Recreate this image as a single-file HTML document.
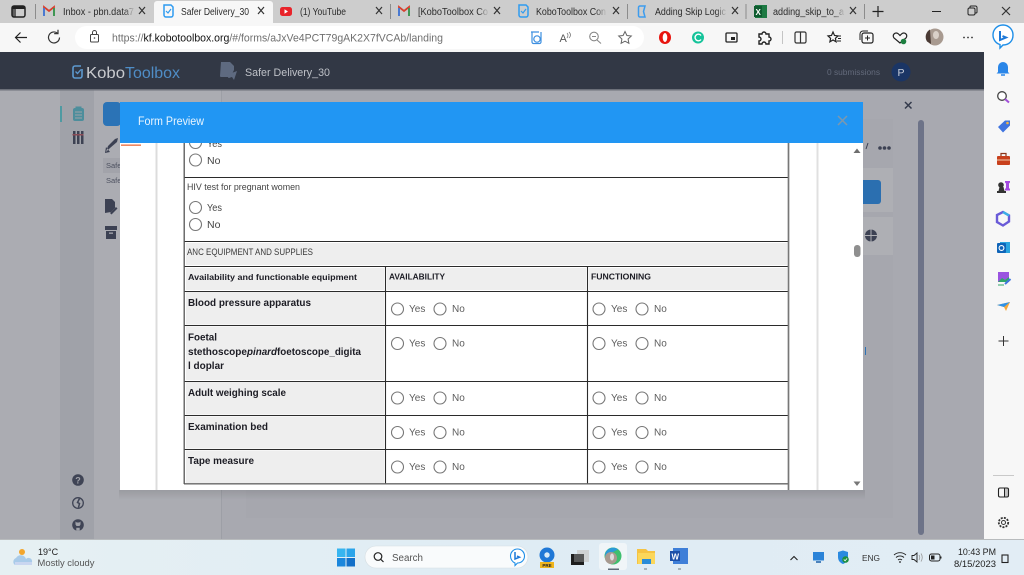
<!DOCTYPE html>
<html><head><meta charset="utf-8"><title>Form Preview</title>
<style>
html,body{margin:0;padding:0;width:1024px;height:575px;overflow:hidden;background:#aaabb1}
svg{display:block;position:absolute;left:0;top:0}
text{font-family:"Liberation Sans",sans-serif;white-space:pre}
.tab{font-size:10px;fill:#2b2b2b}
.yn{font-size:10px;fill:#5d5d5d}
.b{font-weight:bold;font-size:10.5px;fill:#1c1c24}
.h{font-weight:bold;font-size:8.7px;fill:#1c1c24}
.r{fill:#fff;stroke:#777;stroke-width:1.1}
.x{stroke:#333;stroke-width:1.2;fill:none}
.ic{fill:none;stroke:#333;stroke-width:1.2}
</style></head><body>
<svg width="1024" height="575" viewBox="0 0 1024 575" xmlns="http://www.w3.org/2000/svg">
<defs>
<linearGradient id="task" x1="0" x2="1" y1="0" y2="0"><stop offset="0" stop-color="#e6f0f3"/><stop offset=".5" stop-color="#dfecf4"/><stop offset="1" stop-color="#e2edf5"/></linearGradient>
<linearGradient id="fade" x1="0" x2="1" y1="0" y2="0"><stop offset="0" stop-color="#cdcdcd" stop-opacity="0"/><stop offset="1" stop-color="#cdcdcd"/></linearGradient>
<linearGradient id="shadow" x1="0" x2="0" y1="0" y2="1"><stop offset="0" stop-color="#000" stop-opacity=".1"/><stop offset="1" stop-color="#000" stop-opacity="0"/></linearGradient>
</defs>

<!-- tab strip -->
<rect width="1024" height="23" fill="#cdcdcd"/>
<rect x="12" y="6" width="13" height="11" rx="2" fill="none" stroke="#222" stroke-width="1.5"/><rect x="12" y="6" width="13" height="3" fill="#222"/><rect x="12" y="6" width="4" height="11" fill="#222" opacity=".65"/>
<path d="M35.5 4v15M390.5 4v15M627.5 4v15M746 4v15M864.5 4v15" stroke="#8c8c8c" stroke-width="1"/>
<path d="M44 16V7l5 4 5-4v9" fill="none" stroke="#d8402f" stroke-width="1.8"/><path d="M44 16V8" stroke="#3a7de0" stroke-width="1.8"/><path d="M54 16V8" stroke="#2f9e56" stroke-width="1.8"/>
<text x="63" y="15" class="tab" textLength="71" lengthAdjust="spacingAndGlyphs">Inbox - pbn.data7</text><rect x="124" y="3" width="11" height="17" fill="url(#fade)"/>
<path class="x" d="M139 7l6 7M145 7l-6 7"/>
<path d="M154 23V4a3 3 0 0 1 3-3H270a3 3 0 0 1 3 3V23z" fill="#f7f7f7"/>
<path d="M164 5h7l2 2v8a2 2 0 0 1-2 2h-5a2 2 0 0 1-2-2z" fill="none" stroke="#2f9bf0" stroke-width="1.5"/><path d="M166 11l2 2 3-4" fill="none" stroke="#2f9bf0" stroke-width="1.2"/>
<text x="181" y="15" class="tab" textLength="68" lengthAdjust="spacingAndGlyphs">Safer Delivery_30</text>
<path class="x" d="M258 7l6 7M264 7l-6 7"/>
<rect x="280" y="7" width="12" height="9" rx="2.5" fill="#e8232a"/><path d="M284.500 9.200v4.600l3.500-2.300z" fill="#fff"/>
<text x="300" y="15" class="tab" textLength="46" lengthAdjust="spacingAndGlyphs">(1) YouTube</text>
<path class="x" d="M376 7l6 7M382 7l-6 7"/>
<path d="M399 16V7l5 4 5-4v9" fill="none" stroke="#d8402f" stroke-width="1.8"/><path d="M399 16V8" stroke="#3a7de0" stroke-width="1.8"/><path d="M409 16V8" stroke="#2f9e56" stroke-width="1.8"/>
<text x="418" y="15" class="tab" textLength="70" lengthAdjust="spacingAndGlyphs">[KoboToolbox Co</text><rect x="478" y="3" width="11" height="17" fill="url(#fade)"/>
<path class="x" d="M494 7l6 7M500 7l-6 7"/>
<path d="M519 5h7l2 2v8a2 2 0 0 1-2 2h-5a2 2 0 0 1-2-2z" fill="none" stroke="#2f9bf0" stroke-width="1.5"/><path d="M521 11l2 2 3-4" fill="none" stroke="#2f9bf0" stroke-width="1.2"/>
<text x="536" y="15" class="tab" textLength="70" lengthAdjust="spacingAndGlyphs">KoboToolbox Con</text><rect x="596" y="3" width="11" height="17" fill="url(#fade)"/>
<path class="x" d="M613 7l6 7M619 7l-6 7"/>
<path d="M645 6h-5a1.500 1.500 0 0 0-1.500 1.500v8A1.500 1.500 0 0 0 640 17h5l-1.500-5.500L645 6z" fill="none" stroke="#3d9cee" stroke-width="1.5"/>
<text x="655" y="15" class="tab" textLength="71" lengthAdjust="spacingAndGlyphs">Adding Skip Logic</text><rect x="716" y="3" width="11" height="17" fill="url(#fade)"/>
<path class="x" d="M732 7l6 7M738 7l-6 7"/>
<rect x="755" y="5" width="12" height="13" fill="#1d7a43"/><rect x="754" y="6" width="8" height="11" fill="#0f5c30"/><text x="755.500" y="15" font-size="8" font-weight="bold" fill="#fff">X</text>
<text x="773" y="15" class="tab" textLength="71" lengthAdjust="spacingAndGlyphs">adding_skip_to_a</text><rect x="834" y="3" width="11" height="17" fill="url(#fade)"/>
<path class="x" d="M850 7l6 7M856 7l-6 7"/>
<path d="M878 6v11M872.500 11.500h11" stroke="#222" stroke-width="1.2"/>
<path d="M932 11.500h9" stroke="#222" stroke-width="1"/>
<rect x="968" y="8" width="7" height="7" rx="1.500" fill="none" stroke="#222"/><path d="M970 8V7a1 1 0 0 1 1-1h4.500a1.500 1.500 0 0 1 1.500 1.500V12a1 1 0 0 1-1 1h-1" fill="none" stroke="#222"/>
<path class="x" d="M1002 7l8 8M1010 7l-8 8"/>

<!-- toolbar -->
<rect y="23" width="1024" height="29" fill="#f7f7f7"/>
<path d="M27 37.500H16M20.500 32.500l-5 5 5 5" fill="none" stroke="#222" stroke-width="1.200"/>
<path d="M59.500 37.500a5.500 5.500 0 1 1-2-4.300M58 29.800v3.800h-3.800" fill="none" stroke="#333" stroke-width="1.200"/>
<rect x="75" y="26" width="569" height="23" rx="11.500" fill="#fff"/>
<rect x="90.500" y="34.500" width="8" height="7.500" rx="1" fill="none" stroke="#444"/><path d="M92.500 34.500v-2a2 2 0 0 1 4 0v2" fill="none" stroke="#444"/><circle cx="94.500" cy="38" r=".8" fill="#444"/>
<text x="112" y="41.500" font-size="11" fill="#6f6f6f" textLength="331" lengthAdjust="spacingAndGlyphs">https://<tspan fill="#111">kf.kobotoolbox.org</tspan>/#/forms/aJxVe4PCT79gAK2X7fVCAb/landing</text>
<g fill="none" stroke="#3d8fe0" stroke-width="1.200"><path d="M531 32h8M532 32v10a1.500 1.500 0 0 0 1.500 1.500h6a1.500 1.500 0 0 0 1.500-1.500v-10"/><circle cx="537" cy="39" r="3.200"/></g>
<text x="559.500" y="42" font-size="11" fill="#555">A</text><path d="M567 33q2 2 0 5M569 32q3 3 0 6" fill="none" stroke="#777" stroke-width=".8"/>
<circle cx="594" cy="36.500" r="4.300" fill="none" stroke="#888" stroke-width="1.100"/><path d="M597 40l4 3.500M592 36.500h4" stroke="#888" stroke-width="1.100"/>
<path d="M625 31.500l1.900 4 4.400.500-3.200 3 .8 4.300-3.900-2.100-3.900 2.100.8-4.300-3.200-3 4.400-.500z" fill="none" stroke="#666" stroke-width="1"/>
<ellipse cx="665" cy="37.500" rx="6" ry="6.500" fill="#e8150f"/><ellipse cx="665" cy="37.500" rx="2.300" ry="4.500" fill="#fff"/>
<circle cx="698" cy="37.500" r="6" fill="#15c39a"/><path d="M701 35.500a3.300 3.300 0 1 0 0 4" fill="none" stroke="#fff" stroke-width="1.400"/>
<rect x="726" y="33" width="11" height="9" rx="1" fill="none" stroke="#222" stroke-width="1.300"/><rect x="731" y="37" width="4" height="3" fill="#222"/>
<path d="M759 34h3a2 2 0 0 1 4 0h3v3a2 2 0 0 1 0 4v3h-3a2 2 0 0 0-4 0h-3v-3a2 2 0 0 0 0-4z" fill="none" stroke="#222" stroke-width="1.400"/>
<path d="M782.500 31v13" stroke="#c4c4c4"/>
<rect x="795" y="32" width="11" height="11" rx="1.500" fill="none" stroke="#333" stroke-width="1.200"/><path d="M800.500 32v11" stroke="#333" stroke-width="1.200"/>
<path d="M833 32l1.500 3.500 3.500.4-2.600 2.400.7 3.500-3.100-1.800-3.100 1.800.7-3.500-2.600-2.400 3.500-.4z" fill="none" stroke="#222" stroke-width="1.200"/><path d="M838 36h3M838 38.500h3M837 41h4" stroke="#222"/>
<rect x="862" y="33" width="11" height="10" rx="2" fill="none" stroke="#222" stroke-width="1.200"/><path d="M867.500 35.500v5M865 38h5" stroke="#222"/><path d="M860 40v-6a3 3 0 0 1 3-3h5" fill="none" stroke="#222"/>
<path d="M900 43l-6-5a3 3 0 0 1 4.500-4l1.500 1.500 1.500-1.500a3 3 0 0 1 4.500 4z" fill="none" stroke="#222" stroke-width="1.200"/><circle cx="903.500" cy="41.500" r="2.800" fill="#1c7f3f"/>
<circle cx="935" cy="37" r="8.500" fill="#a89a90"/><path d="M930 29.500a8.500 8.500 0 0 0-3 12l4 2.500z" fill="#4a3a34"/><ellipse cx="936" cy="35" rx="3" ry="4" fill="#d9d0c8"/>
<circle cx="964" cy="37.500" r=".9" fill="#333"/><circle cx="968" cy="37.500" r=".9" fill="#333"/><circle cx="972" cy="37.500" r=".9" fill="#333"/>
<path d="M993 35a10 10 0 0 1 20 0c0 6-4 10-10 10l-3 3v-3.500c-4-1-7-5-7-9.500z" fill="#fff" stroke="#1f8fe8" stroke-width="1.400"/><path d="M1000 31v9l6-2.500-3.500-1.500" fill="none" stroke="#1c78d8" stroke-width="2"/>

<!-- page background -->
<rect x="0" y="89" width="984" height="451" fill="#abacb2"/>
<rect x="60" y="90" width="34" height="450" fill="#a0a2a9"/>
<rect x="221" y="90" width="763" height="450" fill="#a8a9b0"/>
<rect x="221" y="90" width="1" height="450" fill="#9d9fa6"/>
<rect x="246" y="119" width="647" height="399" fill="#a6a7ae"/>
<rect x="863" y="168" width="30" height="44" fill="#aeafb4"/>
<rect x="863" y="217" width="30" height="38" fill="#aeafb4"/>

<!-- kobo header -->
<rect y="52" width="984" height="37" fill="#323845"/>
<rect y="89" width="984" height="1.500" fill="#6c7079"/>
<path d="M81 66h-6a2 2 0 0 0-2 2v8a2 2 0 0 0 2 2h5a2 2 0 0 0 2-2v-7" fill="none" stroke="#5d99cf" stroke-width="1.600"/><path d="M75.500 71.500l2 2 3.500-4" fill="none" stroke="#5d99cf" stroke-width="1.300"/>
<text x="86" y="78" font-size="16" fill="#c8cace" textLength="39" lengthAdjust="spacingAndGlyphs">Kobo</text>
<text x="125" y="78" font-size="16" fill="#4f8dc6" textLength="55" lengthAdjust="spacingAndGlyphs">Toolbox</text>
<path d="M221 62h9l4 4v4l-4 8 -2-1h-7a1 1 0 0 1-1-1z" fill="#5e6a80"/><path d="M229 74l8-3-3 9-2-3-4 1z" fill="#5e6a80"/>
<text x="245" y="76" font-size="11" fill="#bfc2c8" textLength="85" lengthAdjust="spacingAndGlyphs">Safer Delivery_30</text>
<text x="827" y="75" font-size="8" fill="#636a7b" textLength="53" lengthAdjust="spacingAndGlyphs">0 submissions</text>
<circle cx="901" cy="72" r="9.500" fill="#1a3565"/><text x="901" y="76" font-size="10.500" fill="#c9cfdb" text-anchor="middle">P</text>

<!-- dimmed app -->
<rect x="60" y="106" width="2" height="16" fill="#4f9aa2"/>
<rect x="73" y="108" width="11" height="13" rx="2" fill="#4d8e9c"/><rect x="75.500" y="106.500" width="6" height="3" fill="#4d8e9c"/><path d="M75 112h7M75 115h7M75 118h7" stroke="#a0a2a9" stroke-width=".9"/>
<path d="M73 131h2.500v13H73zM77 131h2.500v13H77zM81 131h2.500v13H81z" fill="#3d4253"/><path d="M72.500 134h11v1.500h-11z" fill="#8a4b55"/>
<rect x="103" y="102" width="18" height="24" rx="4" fill="#2b73b6"/>
<path d="M106 152l2-6 7-7 3-1-1 4-7 6zM106 147l-1 6 5-1z" fill="#3c4153"/>
<rect x="103" y="158" width="17" height="15" fill="#a2a3aa"/>
<text x="106" y="168" font-size="7.500" fill="#4d5160">Safe</text>
<text x="106" y="183" font-size="7.500" fill="#4d5160">Safe</text>
<path d="M105 199h7l3 3v6l-4 4-6 1z" fill="#3c4153"/><path d="M110 213l6-6 1.500 1.500-6 6z" fill="#3c4153"/>
<path d="M105 226h12v4h-12zM106 231h10v8h-10z" fill="#3c4153"/><rect x="109" y="232.500" width="4" height="1.300" fill="#a8a9b0"/>
<circle cx="78" cy="480" r="5.800" fill="#3f4455"/><text x="78" y="483.500" font-size="9" font-weight="bold" fill="#a0a2a9" text-anchor="middle">?</text>
<circle cx="78" cy="503" r="5.300" fill="none" stroke="#3f4455" stroke-width="1.300"/><path d="M79.500 498.500l-2 4 2 1-1 4" fill="none" stroke="#3f4455" stroke-width="1.500"/>
<circle cx="78" cy="525" r="5.800" fill="#3f4455"/><path d="M75.500 521.500l1.200 1h2.600l1.200-1v3l-1 1.500h-3l-1-1.500z" fill="#a0a2a9"/><path d="M76.300 530.800v-3h3.400v3z" fill="#a0a2a9"/>
<path class="x" style="stroke:#343a4c;stroke-width:1.500" d="M905 102l6.500 6.500M911.500 102l-6.500 6.500"/>
<rect x="918" y="120" width="6" height="415" rx="3" fill="#6d7388"/>
<path d="M866 149l2-6" stroke="#3c4153"/>
<circle cx="880" cy="148" r="1.800" fill="#3c4153"/><circle cx="884.500" cy="148" r="1.800" fill="#3c4153"/><circle cx="889" cy="148" r="1.800" fill="#3c4153"/>
<rect x="860" y="180" width="21" height="24" rx="3" fill="#2b6fb0"/>
<circle cx="871" cy="235.500" r="6" fill="#3c4153"/><path d="M865 235.500h12M871 229.500v12" stroke="#aeafb4"/>
<path d="M865.500 347v8" stroke="#2f73b5"/>

<!-- modal -->
<rect x="119" y="490" width="746" height="10" fill="url(#shadow)"/>
<rect x="120" y="102" width="743" height="388" fill="#fff"/>
<rect x="121" y="144.500" width="20" height="1.300" fill="#ea6a3c"/>
<rect x="155.500" y="143" width="2" height="347" fill="#dcdcdc"/>
<rect x="816.500" y="143" width="2" height="347" fill="#e0e0e0"/>

<!-- form rows -->
<rect x="186" y="243" width="601" height="22" fill="#eeeeee"/>
<rect x="186" y="268" width="198" height="22" fill="#eeeeee"/>
<rect x="387" y="268" width="199" height="22" fill="#eeeeee"/>
<rect x="589" y="268" width="198" height="22" fill="#eeeeee"/>
<rect x="186" y="292" width="198" height="32.500" fill="#eeeeee"/>
<rect x="186" y="326.500" width="198" height="53.500" fill="#eeeeee"/>
<rect x="186" y="382" width="198" height="32.500" fill="#eeeeee"/>
<rect x="186" y="416.500" width="198" height="32" fill="#eeeeee"/>
<rect x="186" y="450.500" width="198" height="32.500" fill="#eeeeee"/>
<g stroke="#2b2b2b" stroke-width="1.100" fill="none">
<path d="M184 177.500H789M184 241.500H789M184 266.500H789M184 291.500H789M184 325.500H789M184 381.500H789M184 415.500H789M184 449.500H789"/>
<path d="M385.500 266V484M587.500 266V484"/>
</g>
<path d="M184 483.800H789" stroke="#666" stroke-width="1.300"/>
<path d="M184.200 143V484" stroke="#555" stroke-width="1.300"/>
<path d="M788.500 143V490" stroke="#777" stroke-width="1.700"/>

<circle class="r" cx="195.500" cy="142.500" r="6"/>
<text x="207" y="147" font-size="10.500" fill="#444" textLength="15" lengthAdjust="spacingAndGlyphs">Yes</text>
<circle class="r" cx="195.500" cy="160" r="6"/>
<text x="207" y="164" font-size="10.500" fill="#444">No</text>
<text x="187" y="190" font-size="8.800" fill="#444" textLength="113" lengthAdjust="spacingAndGlyphs">HIV test for pregnant women</text>
<circle class="r" cx="195.500" cy="207.500" r="6"/>
<text x="207" y="211" font-size="10.500" fill="#444" textLength="15" lengthAdjust="spacingAndGlyphs">Yes</text>
<circle class="r" cx="195.500" cy="224.500" r="6"/>
<text x="207" y="228" font-size="10.500" fill="#444">No</text>
<text x="187" y="255" font-size="8.800" fill="#3a3a3a" textLength="126" lengthAdjust="spacingAndGlyphs">ANC EQUIPMENT AND SUPPLIES</text>
<text x="188" y="280" class="h" textLength="169" lengthAdjust="spacingAndGlyphs">Availability and functionable equipment</text>
<text x="389" y="279.500" class="h" textLength="56" lengthAdjust="spacingAndGlyphs">AVAILABILITY</text>
<text x="591" y="279.500" class="h" textLength="60" lengthAdjust="spacingAndGlyphs">FUNCTIONING</text>

<text x="188" y="306" class="b" textLength="123" lengthAdjust="spacingAndGlyphs">Blood pressure apparatus</text>
<text x="188" y="340.500" class="b" textLength="29" lengthAdjust="spacingAndGlyphs">Foetal</text>
<text x="188" y="355" class="b" textLength="59" lengthAdjust="spacingAndGlyphs">stethoscope</text>
<text x="247" y="355" class="b" font-style="italic" textLength="30" lengthAdjust="spacingAndGlyphs">pinard</text>
<text x="277" y="355" class="b" textLength="84" lengthAdjust="spacingAndGlyphs">foetoscope_digita</text>
<text x="188" y="369" class="b" textLength="36" lengthAdjust="spacingAndGlyphs">l doplar</text>
<text x="188" y="396" class="b" textLength="98" lengthAdjust="spacingAndGlyphs">Adult weighing scale</text>
<text x="188" y="430" class="b" textLength="80" lengthAdjust="spacingAndGlyphs">Examination bed</text>
<text x="188" y="464" class="b" textLength="66" lengthAdjust="spacingAndGlyphs">Tape measure</text>

<!-- radio matrix -->
<circle class="r" cx="397.500" cy="309" r="6"/><circle class="r" cx="440" cy="309" r="6"/><circle class="r" cx="599" cy="309" r="6"/><circle class="r" cx="642" cy="309" r="6"/>
<text x="409" y="312" class="yn">Yes</text><text x="452" y="312" class="yn">No</text><text x="611" y="312" class="yn">Yes</text><text x="654" y="312" class="yn">No</text>
<circle class="r" cx="397.500" cy="343.500" r="6"/><circle class="r" cx="440" cy="343.500" r="6"/><circle class="r" cx="599" cy="343.500" r="6"/><circle class="r" cx="642" cy="343.500" r="6"/>
<text x="409" y="346.500" class="yn">Yes</text><text x="452" y="346.500" class="yn">No</text><text x="611" y="346.500" class="yn">Yes</text><text x="654" y="346.500" class="yn">No</text>
<circle class="r" cx="397.500" cy="398" r="6"/><circle class="r" cx="440" cy="398" r="6"/><circle class="r" cx="599" cy="398" r="6"/><circle class="r" cx="642" cy="398" r="6"/>
<text x="409" y="401" class="yn">Yes</text><text x="452" y="401" class="yn">No</text><text x="611" y="401" class="yn">Yes</text><text x="654" y="401" class="yn">No</text>
<circle class="r" cx="397.500" cy="432.500" r="6"/><circle class="r" cx="440" cy="432.500" r="6"/><circle class="r" cx="599" cy="432.500" r="6"/><circle class="r" cx="642" cy="432.500" r="6"/>
<text x="409" y="435.500" class="yn">Yes</text><text x="452" y="435.500" class="yn">No</text><text x="611" y="435.500" class="yn">Yes</text><text x="654" y="435.500" class="yn">No</text>
<circle class="r" cx="397.500" cy="467" r="6"/><circle class="r" cx="440" cy="467" r="6"/><circle class="r" cx="599" cy="467" r="6"/><circle class="r" cx="642" cy="467" r="6"/>
<text x="409" y="470" class="yn">Yes</text><text x="452" y="470" class="yn">No</text><text x="611" y="470" class="yn">Yes</text><text x="654" y="470" class="yn">No</text>

<!-- modal scrollbar -->
<path d="M853.500 153l3.500-4.500 3.500 4.500z" fill="#6e6e6e"/>
<rect x="854" y="245" width="6.500" height="12" rx="3" fill="#8f8f8f"/>
<path d="M853.500 481.500l3.500 4.500 3.500-4.500z" fill="#777"/>

<!-- modal header -->
<rect x="120" y="102" width="743" height="41" fill="#2196f3"/>
<text x="138" y="125" font-size="11.500" fill="#eaf5fe" textLength="66" lengthAdjust="spacingAndGlyphs">Form Preview</text>
<path d="M838 116l9 9M847 116l-9 9" stroke="#7d98ad" stroke-width="1.500"/>

<!-- edge sidebar -->
<rect x="984" y="52" width="40" height="488" fill="#f7f7f7"/>
<path d="M998 72v-5a5 5 0 0 1 10 0v5l1.500 1.500h-13z" fill="#2a86e8"/><path d="M1001 75h4" stroke="#2a86e8" stroke-width="1.500"/>
<circle cx="1002" cy="96" r="4.300" fill="#fff" stroke="#444" stroke-width="1.300"/><path d="M1005 99l4 3.500" stroke="#a24fd8" stroke-width="2"/>
<path d="M998 127l7-6.500h5v5l-7 7z" fill="#3f74e0"/><circle cx="1007.500" cy="123" r="1.300" fill="#f5b342"/>
<rect x="997" y="156" width="13" height="9" rx="1" fill="#c8401c"/><path d="M1001 156v-2.500h5v2.500" fill="none" stroke="#8a3418" stroke-width="1.200"/><path d="M997 160h13" stroke="#f1c9a8"/>
<circle cx="1001" cy="185" r="2.800" fill="#333"/><path d="M999.500 187l-1 4h-1.500v2h9v-2h-1.500l-1-4z" fill="#333"/><path d="M1005 181h5v1.500l-1 1v4.500l1 1v1.500h-5v-1.500l1-1v-4.500l-1-1z" fill="#a34be0"/>
<path d="M1003 212l6 3.500v6l-6 4-6-3.500v-7z" fill="none" stroke="#6a5bd8" stroke-width="2.400"/><path d="M1003 212l6 3.500" stroke="#3ab0e8" stroke-width="2.400"/>
<rect x="1000" y="242" width="10" height="11" fill="#2ba6e0"/><rect x="997" y="243" width="9" height="10" rx="1" fill="#0f64b8"/><circle cx="1001.500" cy="248" r="2.400" fill="none" stroke="#fff" stroke-width="1.100"/>
<rect x="998" y="272" width="11" height="10" fill="#9a54e0"/><path d="M998 282l4-4 3 2 4-3v5h-11z" fill="#2fa76a"/><path d="M1005 284l5.500-5" stroke="#3f74e0" stroke-width="2"/><path d="M998 285h6" stroke="#2fa76a"/>
<path d="M997 305l13-3-4 9-2-4z" fill="#f5a83a"/><path d="M997 305l13-3-6 5z" fill="#2f92e6"/>
<path d="M1003.500 336v10M998.500 341h10" stroke="#333" stroke-width="1"/>
<path d="M993 475.500h21" stroke="#c9c9c9"/>
<rect x="998.500" y="488" width="10" height="9" rx="1.500" fill="none" stroke="#222" stroke-width="1.100"/><rect x="1004" y="488" width="4.500" height="9" fill="#222" opacity=".25"/><path d="M1004.500 488v9" stroke="#222"/>
<circle cx="1003.500" cy="522.500" r="4.700" fill="none" stroke="#333" stroke-width="1.800" stroke-dasharray="2 1.200"/><circle cx="1003.500" cy="522.500" r="2" fill="none" stroke="#333"/>

<!-- taskbar -->
<rect y="539" width="1024" height="1" fill="#b8bbbd"/>
<rect y="540" width="1024" height="35" fill="url(#task)"/>
<path d="M20 553l3-4 1 4z" fill="#f2a52c"/><circle cx="22" cy="552" r="3" fill="#f2a52c"/>
<path d="M15 565a4 4 0 0 1 1-7 5.500 5.500 0 0 1 10 1 3.500 3.500 0 0 1 6 3v3z" fill="#a9cbe9"/><path d="M15 562h17v3H15z" fill="#c9d6f0"/>
<text x="38" y="555" font-size="9" fill="#222">19°C</text>
<text x="37.500" y="566" font-size="9.500" fill="#555" textLength="57" lengthAdjust="spacingAndGlyphs">Mostly cloudy</text>
<rect x="337" y="548.500" width="8.500" height="8.500" fill="#37b5f0"/><rect x="346.500" y="548.500" width="8.500" height="8.500" fill="#2aa4ea"/><rect x="337" y="558" width="8.500" height="8.500" fill="#1a86dc"/><rect x="346.500" y="558" width="8.500" height="8.500" fill="#126fc8"/>
<rect x="365" y="546" width="163" height="22" rx="11" fill="#f9fbfc" stroke="#d5dde2" stroke-width=".6"/>
<circle cx="378" cy="556.500" r="3.800" fill="none" stroke="#222" stroke-width="1.200"/><path d="M381 559.500l2.500 2.500" stroke="#222" stroke-width="1.200"/>
<text x="392" y="561" font-size="10" fill="#555" textLength="31" lengthAdjust="spacingAndGlyphs">Search</text>
<path d="M510.500 556a7 7 0 0 1 14 0c0 4-3 7-7 7l-2.500 2.500V563c-2.700-1-4.500-4-4.500-7z" fill="#fff" stroke="#1f8fe8" stroke-width="1.100"/><path d="M515 552v7l4.500-1.800-2.500-1.200" fill="none" stroke="#1c78d8" stroke-width="1.500"/>
<circle cx="547" cy="555" r="7.500" fill="#1f78d6"/><circle cx="547" cy="555" r="2.700" fill="#d9ecf8"/>
<rect x="540" y="562" width="14" height="6" fill="#f0b51c"/><text x="547" y="567" font-size="4.500" font-weight="bold" fill="#222" text-anchor="middle">PRE</text>
<rect x="577" y="550" width="12" height="12" fill="#cfd2d3"/><rect x="571" y="554" width="13" height="11" fill="#1d1d1d"/><rect x="574" y="554" width="10" height="8" fill="#8f9091"/><rect x="574" y="554" width="10" height="8" fill="#1d1d1d" opacity=".5"/>
<rect x="599" y="543" width="28" height="27" rx="3" fill="#f0f5f8"/>
<circle cx="613" cy="556" r="8.500" fill="#3fbf6f"/><path d="M605 556a8 8 0 0 1 13-6.500z" fill="#2a9ad8"/><circle cx="611" cy="558" r="6" fill="#a89a90"/><ellipse cx="612" cy="557" rx="2" ry="3.500" fill="#ddd"/>
<rect x="608" y="568.500" width="11" height="1.500" fill="#5f6c78"/>
<path d="M637 549h9l2 2h7v13h-18z" fill="#f5c343"/><rect x="638" y="553" width="17" height="11" fill="#fbd75b"/><rect x="642" y="559" width="9" height="5" fill="#2a8cd8"/>
<rect x="644" y="568.500" width="3" height="1" fill="#6b7780"/>
<rect x="673" y="548" width="15" height="16" fill="#3f7fd8"/><rect x="670" y="551" width="10" height="10" fill="#1d50a8"/><text x="671.500" y="559.500" font-size="8" font-weight="bold" fill="#fff">W</text>
<rect x="678" y="568.500" width="3" height="1" fill="#6b7780"/>
<path d="M790.500 560l3.500-3.500 3.500 3.500" fill="none" stroke="#222" stroke-width="1.100"/>
<rect x="813" y="552" width="11" height="8.500" fill="#2a83d8"/><path d="M816 562h5" stroke="#1a5fa8" stroke-width="1.500"/>
<path d="M838 552l5-1.500 5 1.500v5c0 4-2.500 6-5 7-2.500-1-5-3-5-7z" fill="#2a8ae0"/><circle cx="845.500" cy="559.500" r="3.300" fill="#1d8f3f"/><path d="M843.800 559.500l1.300 1.300 2-2.400" fill="none" stroke="#fff" stroke-width=".8"/>
<text x="862" y="561" font-size="8.500" fill="#333" textLength="18" lengthAdjust="spacingAndGlyphs">ENG</text>
<path d="M894 555a9 9 0 0 1 12 0M896 557.500a6 6 0 0 1 8 0M898 560a3 3 0 0 1 4 0" fill="none" stroke="#222" stroke-width=".9"/><circle cx="900" cy="562" r=".9" fill="#222"/>
<path d="M912 555.500h2l3-2.500v9l-3-2.500h-2z" fill="none" stroke="#222" stroke-width=".9"/><path d="M919 555q1.500 2.500 0 5M921 553.500q2.500 4 0 8" fill="none" stroke="#999" stroke-width=".8"/>
<rect x="929.500" y="554" width="10.500" height="7" rx="2" fill="none" stroke="#222" stroke-width="1"/><rect x="931" y="555.500" width="3.500" height="4" fill="#222"/><rect x="940.500" y="556.500" width="1" height="2" fill="#222"/>
<text x="958" y="555" font-size="8.800" fill="#222" textLength="38" lengthAdjust="spacingAndGlyphs">10:43 PM</text>
<text x="954" y="567" font-size="8.800" fill="#222" textLength="42" lengthAdjust="spacingAndGlyphs">8/15/2023</text>
<rect x="1002" y="555" width="6" height="7.500" fill="none" stroke="#222" stroke-width="1.100"/>
</svg>
</body></html>
